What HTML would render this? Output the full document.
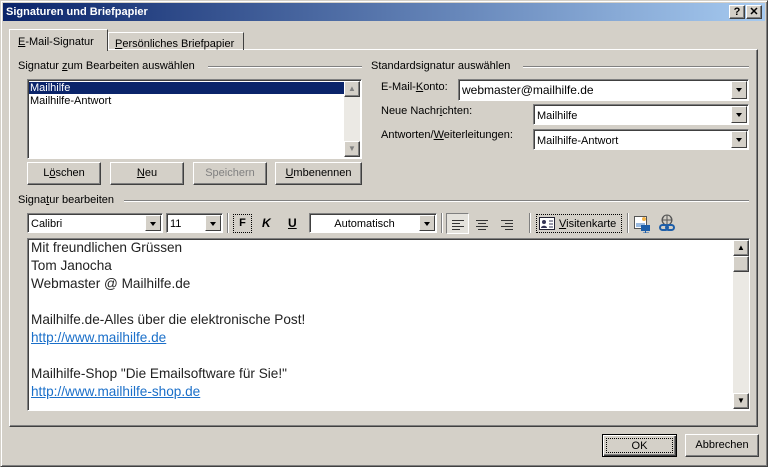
<!DOCTYPE html>
<html><head><meta charset="utf-8"><style>
*{box-sizing:border-box;margin:0;padding:0}
body{width:768px;height:467px;background:#d4d0c8;font-family:"Liberation Sans",sans-serif;font-size:11px;color:#000;position:relative;overflow:hidden}
.a{position:absolute}
.win{left:0;top:0;width:768px;height:467px;border:1px solid;border-color:#d4d0c8 #404040 #404040 #d4d0c8;box-shadow:inset 1px 1px #fff,inset -1px -1px #808080}
.title{left:3px;top:3px;width:762px;height:18px;background:linear-gradient(90deg,#0a246a,#a6caf0);color:#fff;font-weight:bold;padding:3px 3px;font-size:11px}
.raised{background:#d4d0c8;border:1px solid;border-color:#fff #404040 #404040 #fff;box-shadow:inset -1px -1px #808080}
.sunk{background:#fff;border:1px solid;border-color:#808080 #fff #fff #808080;box-shadow:inset 1px 1px #404040}
.btn{text-align:center;line-height:21px}
.grp{height:1px;border-top:1px solid #808080;border-bottom:1px solid #fff}
.dd{position:absolute;right:1px;top:1px;bottom:1px;width:16px;background:#d4d0c8;border:1px solid;border-color:#fff #404040 #404040 #fff}
.dd:after{content:"";position:absolute;left:4px;top:6px;border:3px solid transparent;border-top:4px solid #000}
.cb{padding:3px 3px 0;line-height:15px}
u{text-decoration:underline}
.sep{width:2px;border-left:1px solid #808080;border-right:1px solid #fff;height:20px;top:213px}
.ed{font-size:13.6px;line-height:18px;color:#222}
.lnk{color:#1a6fc9;text-decoration:underline}
</style></head><body>
<div class="a win"></div>
<div class="a title">Signaturen und Briefpapier</div>
<div class="a raised btn" style="left:729px;top:5px;width:16px;height:14px;line-height:12px;font-weight:bold">?</div>
<div class="a raised btn" style="left:746px;top:5px;width:16px;height:14px;line-height:12px;font-weight:bold">✕</div>

<div class="a" style="left:9px;top:49px;width:749px;height:378px;border:1px solid;border-color:#fff #404040 #404040 #fff;box-shadow:inset -1px -1px #808080"></div>
<div class="a" style="left:9px;top:29px;width:99px;height:22px;background:#d4d0c8;border:1px solid;border-color:#fff #404040 transparent #fff;border-bottom:none;padding:6px 8px"><u>E</u>-Mail-Signatur</div>
<div class="a" style="left:108px;top:32px;width:136px;height:18px;border:1px solid;border-color:#fff #404040 transparent #fff;border-bottom:none;padding:5px 6px"><u>P</u>ersönliches Briefpapier</div>

<div class="a" style="left:18px;top:60px">Signatur <u>z</u>um Bearbeiten auswählen</div>
<div class="a grp" style="left:208px;top:66px;width:154px"></div>
<div class="a" style="left:371px;top:60px">Standardsignatur auswählen</div>
<div class="a grp" style="left:523px;top:66px;width:226px"></div>

<div class="a sunk" style="left:27px;top:79px;width:335px;height:80px"></div>
<div class="a" style="left:29px;top:82px;width:315px;height:12px;background:#0a246a;color:#fff;padding-left:1px;line-height:12px">Mailhilfe</div>
<div class="a" style="left:30px;top:95px">Mailhilfe-Antwort</div>
<div class="a" style="left:344px;top:81px;width:16px;height:76px;background:#ebe9e4"></div>
<div class="a raised" style="left:344px;top:81px;width:16px;height:16px;font-size:8px;text-align:center;line-height:13px;color:#808080">▲</div>
<div class="a raised" style="left:344px;top:141px;width:16px;height:16px;font-size:8px;text-align:center;line-height:13px;color:#808080">▼</div>

<div class="a raised btn" style="left:27px;top:162px;width:74px;height:23px">L<u>ö</u>schen</div>
<div class="a raised btn" style="left:110px;top:162px;width:74px;height:23px"><u>N</u>eu</div>
<div class="a raised btn" style="left:193px;top:162px;width:74px;height:23px;color:#808080">Speichern</div>
<div class="a raised btn" style="left:275px;top:162px;width:87px;height:23px"><u>U</u>mbenennen</div>

<div class="a" style="left:381px;top:81px">E-Mail-<u>K</u>onto:</div>
<div class="a sunk cb" style="left:458px;top:79px;width:291px;height:22px;font-size:12px">webmaster@mailhilfe.de<div class="dd"></div></div>
<div class="a" style="left:381px;top:105px">Neue Nachr<u>i</u>chten:</div>
<div class="a sunk cb" style="left:533px;top:104px;width:216px;height:21px;padding-top:4px">Mailhilfe<div class="dd"></div></div>
<div class="a" style="left:381px;top:129px">Antworten/<u>W</u>eiterleitungen:</div>
<div class="a sunk cb" style="left:533px;top:129px;width:216px;height:21px;padding-top:4px">Mailhilfe-Antwort<div class="dd"></div></div>

<div class="a" style="left:18px;top:194px">Signa<u>t</u>ur bearbeiten</div>
<div class="a grp" style="left:124px;top:200px;width:625px"></div>

<div class="a sunk cb" style="left:27px;top:213px;width:136px;height:20px">Calibri<div class="dd"></div></div>
<div class="a sunk cb" style="left:166px;top:213px;width:57px;height:20px">11<div class="dd"></div></div>
<div class="a sep" style="left:227px"></div>
<div class="a" style="left:233px;top:214px;width:19px;height:19px;border:1px dotted #000;text-align:center;line-height:17px;font-weight:bold">F</div>
<div class="a" style="left:262px;top:216px;font-weight:bold;font-style:italic;font-size:12px">K</div>
<div class="a" style="left:288px;top:216px;font-weight:bold;text-decoration:underline;font-size:12px">U</div>
<div class="a sunk cb" style="left:309px;top:213px;width:128px;height:20px;text-align:center;padding-right:20px">Automatisch<div class="dd"></div></div>
<div class="a sep" style="left:441px"></div>
<div class="a" style="left:446px;top:213px;width:23px;height:21px;border:1px solid;border-color:#808080 #fff #fff #808080;background:#e4e2dc"></div>
<svg class="a" style="left:446px;top:213px" width="80" height="21">
<g stroke="#333" stroke-width="1"><path d="M6 7.5h12M6 10.5h8M6 13.5h12M6 16.5h8"/><path d="M30 7.5h12M32 10.5h8M30 13.5h12M32 16.5h8"/><path d="M55 7.5h12M59 10.5h8M55 13.5h12M59 16.5h8"/></g></svg>
<div class="a sep" style="left:529px"></div>
<div class="a" style="left:536px;top:214px;width:86px;height:19px;border:1px dotted #000;padding:3px 4px 0 22px"><u>V</u>isitenkarte</div>
<svg class="a" style="left:539px;top:217px" width="16" height="13"><rect x=".5" y=".5" width="15" height="12" fill="#fff" stroke="#223"/><circle cx="5" cy="5" r="2" fill="#335"/><path d="M2 11c0-3 6-3 6 0z" fill="#335"/><path d="M10 4h4M10 7h4M10 10h4" stroke="#335"/></svg>
<div class="a sep" style="left:627px"></div>
<svg class="a" style="left:633px;top:214px" width="18" height="19"><rect x="1.5" y="2.5" width="12" height="12" fill="#fff" stroke="#555"/><rect x="3" y="9" width="9" height="4" fill="#9bbbe0"/><circle cx="11" cy="5" r="2" fill="#f3b44a"/><rect x="8" y="11" width="9" height="6" fill="#1e5ea8"/><path d="M12.5 17v2M10 19h6" stroke="#1e5ea8"/></svg>
<svg class="a" style="left:658px;top:214px" width="18" height="19"><circle cx="9" cy="6" r="5" fill="none" stroke="#555"/><path d="M4 6h10M9 1v10M6 2c-2 3-2 6 0 8M12 2c2 3 2 6 0 8" stroke="#555" fill="none"/><rect x="2" y="11" width="8" height="5" rx="2.5" fill="none" stroke="#1e5ea8" stroke-width="2"/><rect x="8" y="11" width="8" height="5" rx="2.5" fill="none" stroke="#1e5ea8" stroke-width="2"/></svg>

<div class="a sunk" style="left:27px;top:238px;width:723px;height:173px"></div>
<div class="a" style="left:733px;top:240px;width:16px;height:169px;background:#ebe9e4"></div>
<div class="a raised" style="left:733px;top:240px;width:16px;height:16px;font-size:8px;text-align:center;line-height:13px">▲</div>
<div class="a raised" style="left:733px;top:256px;width:16px;height:16px"></div>
<div class="a raised" style="left:733px;top:393px;width:16px;height:16px;font-size:8px;text-align:center;line-height:13px">▼</div>
<div class="a ed" style="left:31px;top:239px">Mit freundlichen Grüssen<br>Tom Janocha<br>Webmaster @ Mailhilfe.de<br><br>Mailhilfe.de-Alles über die elektronische Post!<br><span class="lnk">http://www.mailhilfe.de</span><br><br>Mailhilfe-Shop "Die Emailsoftware für Sie!"<br><span class="lnk">http://www.mailhilfe-shop.de</span></div>

<div class="a btn" style="left:602px;top:434px;width:75px;height:23px;border:1px solid #000;box-shadow:inset 1px 1px #fff,inset -1px -1px #404040,inset -2px -2px #808080"><div style="position:absolute;left:3px;top:3px;right:3px;bottom:3px;border:1px dotted #000;line-height:15px">OK</div></div>
<div class="a raised btn" style="left:685px;top:434px;width:74px;height:23px">Abbrechen</div>
</body></html>
